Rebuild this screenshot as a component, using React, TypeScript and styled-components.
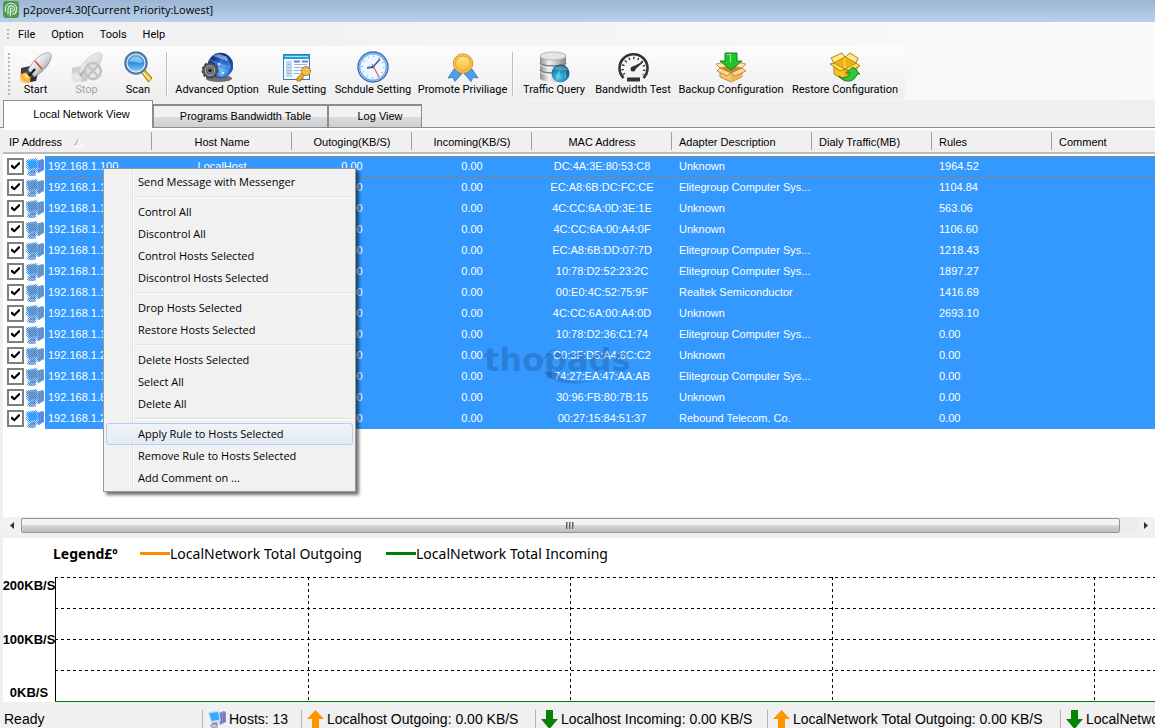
import React from 'react';
import styled, { createGlobalStyle, css } from 'styled-components';

const GlobalStyle = createGlobalStyle`
  *, *::before, *::after { box-sizing: border-box; }
  body {
    margin: 0;
    background: #f0f0f0;
    color: #000;
    font-family: "Liberation Sans", Arial, sans-serif;
    font-size: 11px;
  }
  button { font: inherit; color: inherit; border: 0; background: none; padding: 0; margin: 0; }
`;

const humanist = '"Open Sans", "Noto Sans", sans-serif';
const compact = 'Roboto, "Open Sans", sans-serif';

const Window = styled.div`
  position: relative;
  display: flex;
  flex-direction: column;
  min-height: 100vh;
  overflow: hidden;
`;

/* ---------- title, menu bar ---------- */

const TitleBar = styled.header`
  display: flex;
  align-items: center;
  gap: 4px;
  height: 22px;
  padding: 0 3px 4px;
  background: linear-gradient(#9cb6d3, #b8d2ec);
  font-family: ${humanist};
`;

const Title = styled.h1`
  margin: 0;
  font-size: 11px;
  font-weight: 400;
`;

const MenuBar = styled.nav`
  display: flex;
  align-items: center;
  height: 24px;
  padding-left: 7px;
  background: linear-gradient(90deg, #f0f0f0, #fafafa);
  font-family: ${compact};
`;

const Grip = styled.span<{ $height: number }>`
  width: 2px;
  height: ${p => p.$height}px;
  background: repeating-linear-gradient(#b8b8b8 0 2px, transparent 2px 4px);
`;

const MenuButton = styled.button`
  margin-left: 9px;
  padding-right: 7px;
`;

/* ---------- tool bar ---------- */

const Rebar = styled.div`
  display: flex;
  height: 54px;
  padding-left: 4px;
  background: linear-gradient(90deg, #f0f0f0, #fafafa);
`;

const ToolBar = styled.div`
  display: flex;
  align-items: center;
  height: 53px;
  padding: 2px 2px 0 4px;
  border-radius: 3px;
  background: linear-gradient(#fcfcfc, #eeeeee);
  font-family: ${compact};
`;

const ToolButton = styled.button<{ $width: number }>`
  display: flex;
  flex-direction: column;
  align-items: center;
  flex: none;
  width: ${p => p.$width}px;
  white-space: nowrap;
  line-height: 14px;
  &:disabled { color: #a5a5a5; }
  svg { display: block; }
`;

const ToolSeparator = styled.span`
  width: 2px;
  height: 44px;
  margin: 0 3px 0 2px;
  border-left: 1px solid #bdbdbd;
  border-right: 1px solid #fff;
`;

/* ---------- tabs ---------- */

const TabStrip = styled.div`
  display: flex;
  align-items: flex-end;
  height: 28px;
  padding-left: 3px;
  border-bottom: 1px solid #898c95;
`;

const Tab = styled.button<{ $width: number }>`
  width: ${p => p.$width}px;
  height: 23px;
  padding: 0 0 1px 10px;
  border: 1px solid #898c95;
  border-top-width: 2px;
  border-bottom: 0;
  background: linear-gradient(#f2f2f2 0 50%, #dddddd 50%, #cfcfcf);
  &[aria-selected="true"] {
    position: relative;
    height: 28px;
    margin-bottom: -1px;
    padding: 0 0 2px 7px;
    border-top-width: 1px;
    background: #fff;
  }
`;

/* ---------- host list ---------- */

const ListPane = styled.main`
  flex: 1;
  display: flex;
  flex-direction: column;
  margin-left: 3px;
  padding-top: 2px;
  background: #fff;
`;

const HostTable = styled.table`
  width: 100%;
  table-layout: fixed;
  border-collapse: separate;
  border-spacing: 0;
`;

type Align = 'left' | 'center';

const HeadCell = styled.th<{ $align: Align }>`
  height: 26px;
  padding: 0 7px;
  border-bottom: 2px solid #fff;
  background:
    linear-gradient(#a0a0a0, #a0a0a0) right 2px / 1px 18px no-repeat,
    linear-gradient(#f0f0f0 0 22px, #bcbcbc 22px);
  font-weight: 400;
  text-align: ${p => p.$align};
  white-space: nowrap;
  &:first-child { padding-left: 6px; }
  &:last-child { background: linear-gradient(#f0f0f0 0 22px, #bcbcbc 22px); }
`;

const SortMark = styled.svg`
  margin-left: 12px;
  vertical-align: -1px;
`;

const dots = 'repeating-linear-gradient(90deg, #d07010 0 1px, #3399ff 1px 2px)';

const focusLine = css`
  background: ${dots} left top / 100% 1px no-repeat, ${dots} left bottom / 100% 1px no-repeat, #3399ff;
`;

const Cell = styled.td<{ $align: Align; $focused: boolean }>`
  height: 21px;
  padding: 0 7px 1px;
  background: #3399ff;
  color: #fff;
  text-align: ${p => p.$align};
  white-space: nowrap;
  ${p => p.$focused && focusLine}
`;

const HostCell = styled.td`
  height: 21px;
  padding: 0 0 0 4px;
`;

const HostLine = styled.div`
  display: flex;
  align-items: center;
  gap: 2px;
`;

const HostAddress = styled.label<{ $focused: boolean }>`
  display: flex;
  align-items: center;
  flex: 1;
  height: 21px;
  padding: 0 0 1px 3px;
  background: #3399ff;
  color: #fff;
  ${p => p.$focused && focusLine}
`;

const HostIconSlot = styled.span`
  display: block;
  width: 17px;
  height: 18px;
  svg { display: block; }
`;

const HostCheck = styled.input`
  appearance: none;
  flex: none;
  width: 17px;
  height: 17px;
  margin: 0;
  border: 2px solid #7f7f7f;
  background: #fff;
  &:checked::before {
    content: "";
    display: block;
    width: 9px;
    height: 8px;
    margin: 2px;
    background: #000;
    clip-path: polygon(0 40%, 12% 32%, 36% 60%, 88% 0, 100% 6%, 100% 24%, 38% 94%, 0 62%);
  }
`;

const ScrollBar = styled.div`
  display: flex;
  height: 17px;
  margin-top: auto;
  background: #ececec;
`;

const ScrollArrow = styled.button`
  display: flex;
  align-items: center;
  justify-content: center;
  flex: none;
  width: 18px;
  background: #f1f1f1;
`;

const ScrollThumb = styled.div`
  display: flex;
  align-items: center;
  justify-content: center;
  flex: 1;
  height: 15px;
  margin: 1px 17px 0 0;
  border: 1px solid #979797;
  border-radius: 2px;
  background: linear-gradient(#f3f3f3 0 45%, #d6d6d8 50%, #bcbdc0);
`;

const ThumbGrip = styled.span`
  width: 9px;
  height: 7px;
  background: repeating-linear-gradient(90deg, #606060 0 1px, #a8a8a8 1px 2px, transparent 2px 3px);
`;

/* ---------- traffic chart ---------- */

const ChartPane = styled.section`
  margin: 4px 0 0 3px;
  background: #fff;
`;

const Legend = styled.div`
  display: flex;
  align-items: center;
  height: 38px;
  padding: 0 0 8px 50px;
  font-family: "Noto Sans", "Open Sans", sans-serif;
  font-size: 14px;
  white-space: nowrap;
`;

const LegendTitle = styled.strong`
  width: 87px;
`;

const LegendItem = styled.span<{ $color: string }>`
  display: flex;
  align-items: center;
  width: 246px;
  &::before {
    content: "";
    width: 30px;
    height: 3px;
    background: ${p => p.$color};
  }
`;

const ChartBody = styled.div`
  display: flex;
  height: 126px;
`;

const Scale = styled.div`
  display: flex;
  flex-direction: column;
  justify-content: space-between;
  align-items: center;
  flex: none;
  width: 52px;
  padding: 2px 0 1px;
  font-size: 13px;
  font-weight: 700;
  line-height: 16px;
`;

const Plot = styled.svg`
  flex: 1;
  min-width: 0;
  height: 126px;
  display: block;
`;

/* ---------- status bar ---------- */

const StatusBar = styled.footer`
  display: flex;
  height: 26px;
  overflow: hidden;
  font-size: 14px;
`;

const StatusPane = styled.div<{ $width: number }>`
  display: flex;
  align-items: center;
  flex: none;
  gap: 3px;
  width: ${p => p.$width}px;
  height: 34px;
  padding-left: 6px;
  white-space: nowrap;
  background: linear-gradient(#b4b4b4, #b4b4b4) 0 8px / 1px 18px no-repeat;
  &:first-child { background: none; padding-left: 4px; }
  svg { flex: none; }
`;

/* ---------- context menu and watermark ---------- */

const ContextMenu = styled.div`
  position: absolute;
  left: 103px;
  top: 168px;
  width: 253px;
  padding: 2px;
  border: 1px solid #979797;
  background: linear-gradient(90deg, transparent 28px, #e0e0e0 28px 29px, #fff 29px 30px, transparent 30px) #f1f1f1;
  box-shadow: 3px 3px 3px rgba(0, 0, 0, 0.55);
  font-family: ${humanist};
`;

const MenuItem = styled.button<{ $active: boolean }>`
  display: block;
  width: 100%;
  height: 22px;
  padding-left: 31px;
  border: 1px solid transparent;
  border-radius: 3px;
  text-align: left;
  font-size: 11px;
  line-height: 20px;
  ${p => p.$active && css`
    border-color: #aecff7;
    background: linear-gradient(rgba(240, 244, 250, 0.8), rgba(222, 232, 246, 0.8));
  `}
`;

const MenuRule = styled.hr`
  height: 2px;
  margin: 3px 0 3px 28px;
  border: 0;
  border-top: 1px solid #e0e0e0;
  border-bottom: 1px solid #fff;
`;

const Watermark = styled.div`
  position: absolute;
  left: 484px;
  top: 344px;
  color: rgba(30, 70, 130, 0.32);
  font: 700 32px/32px "DejaVu Sans", sans-serif;
  pointer-events: none;
  svg { position: absolute; left: 52px; top: 0; }
`;

/* ---------- drawings ---------- */

const Rocket = ({ muted = false }: { muted?: boolean }) => {
  const id = muted ? 'rk-m' : 'rk';
  return (
    <svg width="32" height="32" viewBox="0 0 32 32" opacity={muted ? 0.75 : 1}>
      <defs>
        <linearGradient id={id} x1="0" y1="0" x2="1" y2="1">
          <stop offset="0.2" stopColor={muted ? '#ececec' : '#ffffff'} />
          <stop offset="0.55" stopColor={muted ? '#d6d6d6' : '#d4d6da'} />
          <stop offset="0.9" stopColor={muted ? '#b0b0b0' : '#6c6f76'} />
        </linearGradient>
        <radialGradient id={id + 'f'}>
          <stop offset="0" stopColor={muted ? '#eee' : '#fff27a'} />
          <stop offset="0.5" stopColor={muted ? '#ddd' : '#ffab2c'} />
          <stop offset="1" stopColor={muted ? '#ddd' : '#ff8a10'} stopOpacity="0" />
        </radialGradient>
      </defs>
      <circle cx="7" cy="25" r="9" fill={`url(#${id}f)`} />
      <path d="M10 15 1 17v6l6-2z" fill={muted ? '#c4c4c4' : '#3d4048'} />
      <path d="M18 22l-2 8-6 1 1-7z" fill={muted ? '#bdbdbd' : '#2c2e34'} />
      <path d="M8 20c3-8 10-16 18-18 4-1 6 1 5 5-2 7-8 14-17 19z" fill={`url(#${id})`} stroke={muted ? '#bbb' : '#85888e'} strokeWidth=".7" />
      <path d="M8 19l6 6-3 2-5-5z" fill={muted ? '#c2c2c2' : '#4a4d55'} />
      <path d="M15 10l7 8" stroke={muted ? '#c8c8c8' : '#e8432e'} strokeWidth="1.600" />
      <path d="M15 18l-6 7" stroke={muted ? '#999' : '#1c1d20'} strokeWidth="2.200" />
      {muted && (
        <g fill="none" stroke="#b2b2b2" strokeWidth="2.400">
          <circle cx="22" cy="20" r="8" fill="#d8d8d8" fillOpacity=".55" />
          <path d="M17 15l10 10M27 15 17 25" />
        </g>
      )}
    </svg>
  );
};

const Magnifier = () => (
  <svg width="32" height="32" viewBox="0 0 32 32">
    <defs>
      <linearGradient id="lens" x1="0" y1="0" x2="0" y2="1">
        <stop offset="0" stopColor="#7cc4f2" />
        <stop offset=".5" stopColor="#2c8ddd" />
        <stop offset="1" stopColor="#9bdcfa" />
      </linearGradient>
    </defs>
    <path d="M19 21l3-3 8 9-3.500 4z" fill="#e8b923" stroke="#9a7412" strokeWidth="1" />
    <path d="M21 21l7 8" stroke="#fff0a0" strokeWidth="1.500" />
    <circle cx="14" cy="12" r="10.500" fill="url(#lens)" stroke="#55759a" strokeWidth="2.500" />
    <circle cx="14" cy="12" r="9" fill="none" stroke="#e4eef8" strokeWidth="1.200" />
    <path d="M7 11c1-6 12-7 14 0-4 3-9-2-14 0z" fill="#fff" opacity=".35" />
  </svg>
);

const GlobeGear = () => (
  <svg width="32" height="32" viewBox="0 0 32 32">
    <defs>
      <radialGradient id="gl" cx=".55" cy=".7" r=".7">
        <stop offset="0" stopColor="#6fc3ff" />
        <stop offset=".5" stopColor="#2467cf" />
        <stop offset="1" stopColor="#0b2170" />
      </radialGradient>
    </defs>
    <ellipse cx="18" cy="27.500" rx="13" ry="3.500" fill="#444" opacity=".75" />
    <circle cx="19.500" cy="14.500" r="12.500" fill="url(#gl)" stroke="#173a88" strokeWidth=".6" />
    <path d="M9 9l9 4 7-8M18 13l11 3-8 9-9-5zM18 13l3 12M29 16l-4-11" fill="none" stroke="#a9dcff" strokeWidth=".5" opacity=".8" />
    <path d="M12 5c5-4 13-1 15 4-4-1-7 0-9-2-2-1-4-1-6-2z" fill="#fff" opacity=".45" />
    <circle cx="18" cy="13" r="1" fill="#fff" /><circle cx="25" cy="9" r=".8" fill="#fff" /><circle cx="22" cy="22" r="1" fill="#fff" />
    <circle cx="9" cy="19.500" r="7.400" fill="#4a4d51" stroke="#3a3d41" strokeWidth="2" strokeDasharray="2.800 1.300" />
    <circle cx="9" cy="19.500" r="7" fill="#54575b" />
    <circle cx="9" cy="19.500" r="4.600" fill="none" stroke="#a8abae" strokeWidth="1.200" />
    <circle cx="9" cy="19.500" r="2.400" fill="#222" stroke="#909396" />
  </svg>
);

const RuleSheet = () => (
  <svg width="32" height="32" viewBox="0 0 32 32">
    <rect x="2.500" y="3.500" width="26" height="25" fill="#f4faff" stroke="#2d83b8" />
    <rect x="3" y="4" width="25" height="4" fill="#2a9fd8" />
    <rect x="4" y="5" width="23" height="1" fill="#a6e0f8" />
    <rect x="5" y="10" width="6" height="16" fill="#c4d8e8" />
    <path d="M13 10.500h6M21 10.500h6" stroke="#5a8cc8" strokeWidth="2" />
    <path d="M6 13.500h4M13 13.500h13M6 16.500h4M13 16.500h13M6 19.500h4M13 19.500h8M6 22.500h4M13 22.500h6" stroke="#9fb6d6" strokeWidth="1.200" />
    <path d="M23 20l-7 7v3h4v-2h2v-2l3-3z" fill="#f1a52c" stroke="#b06c12" strokeWidth=".8" />
    <circle cx="25" cy="20" r="4.500" fill="#f8bd48" stroke="#b5721a" strokeWidth=".9" />
    <circle cx="26" cy="18.500" r="1.400" fill="#fff" stroke="#a86a14" strokeWidth=".6" />
  </svg>
);

const Clock = () => (
  <svg width="34" height="32" viewBox="0 0 34 32">
    <circle cx="17" cy="16" r="15" fill="#edf6ff" stroke="#3b68a8" strokeWidth="1.400" />
    <circle cx="17" cy="16" r="13.400" fill="none" stroke="#72b3f0" strokeWidth="1.800" />
    <circle cx="17" cy="16" r="10.800" fill="none" stroke="#7b93b0" strokeWidth="1.600" strokeDasharray=".8 4.850" />
    <path d="M17 16l7-8" stroke="#3c55b0" strokeWidth="1.500" />
    <path d="M17 16l-6 .8" stroke="#3c55b0" strokeWidth="1.800" />
    <path d="M16 13l7 13" stroke="#f0603c" strokeWidth="1.200" />
    <circle cx="17" cy="16" r="1.300" fill="#4055a0" />
  </svg>
);

const Rosette = () => (
  <svg width="32" height="32" viewBox="0 0 32 32">
    <defs>
      <linearGradient id="md" x1="0" y1="0" x2="0" y2="1">
        <stop offset="0" stopColor="#ffe680" /><stop offset="1" stopColor="#f8bb38" />
      </linearGradient>
    </defs>
    <path d="M7 18 1 27l5-.500 2 4 7-8zM25 18l6 9-5-.500-2 4-7-8z" fill="#4b9fe6" stroke="#2b6fb4" strokeWidth=".7" />
    <circle cx="16" cy="12.500" r="9.600" fill="#f5b63a" stroke="#c98518" strokeWidth="1" />
    <circle cx="16" cy="12.500" r="8.800" fill="none" stroke="#f9cf6a" strokeWidth="1" />
    <circle cx="16" cy="12.500" r="7.400" fill="url(#md)" stroke="#e09a20" strokeWidth=".8" />
  </svg>
);

const Database = () => (
  <svg width="32" height="32" viewBox="0 0 32 32">
    <defs>
      <linearGradient id="db"><stop offset="0" stopColor="#8b8e92" /><stop offset=".35" stopColor="#f4f4f4" /><stop offset="1" stopColor="#84878b" /></linearGradient>
      <radialGradient id="sp" cx=".4" cy=".7" r=".7"><stop offset="0" stopColor="#57d0ea" /><stop offset=".6" stopColor="#1583b2" /><stop offset="1" stopColor="#0a4a72" /></radialGradient>
    </defs>
    <path d="M2 5v22c0 5 26 5 26 0V5z" fill="url(#db)" />
    <path d="M2 12c1 4 25 4 26 0M2 19c1 4 25 4 26 0" fill="none" stroke="#7e8286" strokeWidth="1.400" />
    <path d="M2 13.500c1 4 25 4 26 0M2 20.500c1 4 25 4 26 0" fill="none" stroke="#fff" strokeWidth=".8" />
    <ellipse cx="15" cy="5" rx="13" ry="4" fill="#e4e5e6" stroke="#a6a8aa" strokeWidth=".8" />
    <circle cx="22.500" cy="22.500" r="9" fill="url(#sp)" />
    <path d="M15 19c2-5 12-6 15 0-4 2-10-2-15 0zM19 30c-1-5 1-10 4-12M27 29c2-4 1-8-1-11" fill="#fff" opacity=".28" />
  </svg>
);

const Gauge = () => (
  <svg width="34" height="32" viewBox="0 0 34 32">
    <path d="M7.500 27a14 14 0 1 1 20 0" fill="none" stroke="#303236" strokeWidth="2.600" />
    <path d="M8.300 23.500a10.800 10.800 0 1 1 18.400 0" fill="none" stroke="#303236" strokeWidth="2.600" strokeDasharray="1.300 3.200" />
    <path d="M16 16.500 27 11l-9 8z" fill="#303236" stroke="#303236" strokeWidth="1" />
    <circle cx="17" cy="18" r="2.500" fill="#303236" />
    <rect x="11" y="26.500" width="13" height="4" fill="#303236" />
  </svg>
);

const BackupBox = () => (
  <svg width="32" height="32" viewBox="0 0 32 32">
    <path d="M5 17l11 5 11-5v9l-11 5-11-5z" fill="#f9c766" stroke="#a97c34" strokeWidth=".8" />
    <path d="M16 22v9l11-5v-9z" fill="#f0b450" />
    <path d="M5 17 1 13l9-2 6 5zM27 17l4-4-9-2-6 5z" fill="#ffe3a4" stroke="#a97c34" strokeWidth=".8" />
    <path d="M5 17l11-3 11 3-11 5z" fill="#c8862a" />
    <path d="M5 17l-3 3 10 5 4-3zM27 17l4 3-11 5-4-3z" fill="#fddb92" stroke="#a97c34" strokeWidth=".8" />
    <path d="M10 2h12v8h5L16 19 5 10h5z" fill="#1fc228" stroke="#0b7c14" strokeWidth=".9" />
    <path d="M11.500 3.500h4v8" stroke="#8cf48c" strokeWidth="1.200" fill="none" />
  </svg>
);

const RestoreBox = () => (
  <svg width="34" height="32" viewBox="0 0 34 32">
    <path d="M6 13l10 6 13-5v10l-12 6-11-7z" fill="#f8c420" stroke="#a8741a" strokeWidth=".9" />
    <path d="M16 19l12-5v10l-12 6z" fill="#f2a912" />
    <path d="M6 12 16 6l12 6-11 7z" fill="#f6b014" />
    <path d="M16 6l1 12M6 12l11 6 11-6" stroke="#ffe04a" strokeWidth="1.200" fill="none" />
    <path d="M6 12 3 7l11-5 3 4zM28 12l2-5-8-5-5 4z" fill="#ffec7c" stroke="#a8741a" strokeWidth=".9" />
    <path d="M6 12l-4 1 10 7 5-2zM28 12l4 3-10 5-5-2z" fill="#ffdc48" stroke="#a8741a" strokeWidth=".9" />
    <path d="M11 25c4 3 9 2 11-3h-4l7-6 7 7h-3c-2 8-12 10-18 2z" fill="#2ec63a" stroke="#0e7f1c" strokeWidth=".9" />
  </svg>
);

const AppMark = () => (
  <svg width="16" height="17" viewBox="0 0 16 17">
    <rect width="16" height="17" rx="3" fill="#4e9a50" />
    <g fill="none" stroke="#e4f5df" strokeWidth="1.100" strokeLinecap="round">
      <path d="M2.500 10.500C1 6 4 2.300 8 2.300s7 4 5 8" />
      <path d="M5 13V8.500c0-5 6.500-4.500 6.500-.8 0 3-3.500 3.300-4 2.300" />
      <path d="M7.300 15V8.300c0-2 2-1.500 2-.3" />
      <path d="M9.500 13c2 0 3.500-1.500 4-3" />
    </g>
  </svg>
);

const HostIcon = ({ local, dithered = true }: { local: boolean; dithered?: boolean }) => (
  <svg width="18" height="18" viewBox="0 0 18 18">
    <defs>
      <pattern id="dither" width="2" height="2" patternUnits="userSpaceOnUse">
        <path d="M1 0h1v1H1zM0 1h1v1H0z" fill="#3399ff" shapeRendering="crispEdges" />
      </pattern>
      <clipPath id="host-shape">
        <path d="M0 2 3 1l8-1 1 3 5-2 1 1v10l-5 3-3-1v2l-4 2-5-1 1-4-2-3z" />
      </clipPath>
    </defs>
    <path d="M10 3l6-2 2 1v10l-6 3z" fill={local ? '#8c8ed6' : '#9a9ca4'} />
    <path d="M13 4v9M16 3v9" stroke={local ? '#5b5cad' : '#70747c'} />
    <path d="M0 2 11 .500 13 11l-10 2z" fill={local ? '#c4daf4' : '#b9bbc0'} />
    <path d="M1.500 3.300 10 2l1.500 7.500-8 1.500z" fill={local ? '#33aaff' : '#8c9096'} />
    <path d="M4 13l5-1 1 3-6 1z" fill="#8b8da0" />
    <path d="M2 15l6-1 2 3-6 1z" fill="#c5c8d4" stroke="#8084a0" strokeWidth=".6" />
    {dithered && <rect width="18" height="18" fill="url(#dither)" clipPath="url(#host-shape)" />}
  </svg>
);

const Arrow = ({ up }: { up: boolean }) => (
  <svg width="17" height="19" viewBox="0 0 17 19">
    {up
      ? <path d="M8.500 0 17 9h-5v10H5V9H0z" fill="#ff9500" />
      : <path d="M5 0h7v9h5l-8.500 10L0 9h5z" fill="#078207" />}
  </svg>
);

/* ---------- data ---------- */

interface Tool { label: string; width: number; icon: React.ReactNode; disabled?: boolean }

const toolGroups: Tool[][] = [
  [
    { label: 'Start', width: 51, icon: <Rocket /> },
    { label: 'Stop', width: 51, icon: <Rocket muted />, disabled: true },
    { label: 'Scan', width: 52, icon: <Magnifier /> },
  ],
  [
    { label: 'Advanced Option', width: 92, icon: <GlobeGear /> },
    { label: 'Rule Setting', width: 68, icon: <RuleSheet /> },
    { label: 'Schdule Setting', width: 84, icon: <Clock /> },
    { label: 'Promote Priviliage', width: 95, icon: <Rosette /> },
  ],
  [
    { label: 'Traffic Query', width: 74, icon: <Database /> },
    { label: 'Bandwidth Test', width: 84, icon: <Gauge /> },
    { label: 'Backup Configuration', width: 112, icon: <BackupBox /> },
    { label: 'Restore Configuration', width: 116, icon: <RestoreBox /> },
  ],
];

const columns: { title: string; width?: number; align: Align }[] = [
  { title: 'IP Address', width: 149, align: 'left' },
  { title: 'Host Name', width: 140, align: 'center' },
  { title: 'Outoging(KB/S)', width: 120, align: 'center' },
  { title: 'Incoming(KB/S)', width: 120, align: 'center' },
  { title: 'MAC Address', width: 140, align: 'center' },
  { title: 'Adapter Description', width: 140, align: 'left' },
  { title: 'Dialy Traffic(MB)', width: 120, align: 'left' },
  { title: 'Rules', width: 120, align: 'left' },
  { title: 'Comment', align: 'left' },
];

const ELITE = 'Elitegroup Computer Sys...';

const hosts: [string, string, string, string, string][] = [
  ['192.168.1.100', 'LocalHost', 'DC:4A:3E:80:53:C8', 'Unknown', '1964.52'],
  ['192.168.1.1', '', 'EC:A8:6B:DC:FC:CE', ELITE, '1104.84'],
  ['192.168.1.1', '', '4C:CC:6A:0D:3E:1E', 'Unknown', '563.06'],
  ['192.168.1.1', '', '4C:CC:6A:00:A4:0F', 'Unknown', '1106.60'],
  ['192.168.1.1', '', 'EC:A8:6B:DD:07:7D', ELITE, '1218.43'],
  ['192.168.1.1', '', '10:78:D2:52:23:2C', ELITE, '1897.27'],
  ['192.168.1.1', '', '00:E0:4C:52:75:9F', 'Realtek Semiconductor', '1416.69'],
  ['192.168.1.1', '', '4C:CC:6A:00:A4:0D', 'Unknown', '2693.10'],
  ['192.168.1.1', '', '10:78:D2:36:C1:74', ELITE, '0.00'],
  ['192.168.1.2', '', 'C0:3F:D5:A4:6C:C2', 'Unknown', '0.00'],
  ['192.168.1.1', '', '74:27:EA:47:AA:AB', ELITE, '0.00'],
  ['192.168.1.8', '', '30:96:FB:80:7B:15', 'Unknown', '0.00'],
  ['192.168.1.2', '', '00:27:15:84:51:37', 'Rebound Telecom. Co.', '0.00'],
];

const menuGroups = [
  ['Send Message with Messenger'],
  ['Control All', 'Discontrol All', 'Control Hosts Selected', 'Discontrol Hosts Selected'],
  ['Drop Hosts Selected', 'Restore Hosts Selected'],
  ['Delete Hosts Selected', 'Select All', 'Delete All'],
  ['Apply Rule to Hosts Selected', 'Remove Rule to Hosts Selected', 'Add Comment on ...'],
];

export default function App() {
  return (
    <Window>
      <GlobalStyle />
      <TitleBar>
        <AppMark />
        <Title>p2pover4.30[Current Priority:Lowest]</Title>
      </TitleBar>
      <MenuBar>
        <Grip $height={10} />
        {['File', 'Option', 'Tools', 'Help'].map(name => <MenuButton key={name}>{name}</MenuButton>)}
      </MenuBar>
      <Rebar>
        <ToolBar>
          <Grip $height={42} />
          {toolGroups.map((group, i) => (
            <React.Fragment key={i}>
              {i > 0 && <ToolSeparator />}
              {group.map(tool => (
                <ToolButton key={tool.label} $width={tool.width} disabled={tool.disabled}>
                  {tool.icon}
                  {tool.label}
                </ToolButton>
              ))}
            </React.Fragment>
          ))}
        </ToolBar>
      </Rebar>
      <TabStrip role="tablist">
        <Tab role="tab" aria-selected="true" $width={150}>Local Network View</Tab>
        <Tab role="tab" aria-selected="false" $width={175}>Programs Bandwidth Table</Tab>
        <Tab role="tab" aria-selected="false" $width={94}>Log View</Tab>
      </TabStrip>

      <ListPane>
        <HostTable>
          <colgroup>
            {columns.map(c => <col key={c.title} width={c.width} />)}
          </colgroup>
          <thead>
            <tr>
              {columns.map((c, i) => (
                <HeadCell key={c.title} $align={c.align} scope="col">
                  {c.title}
                  {i === 0 && (
                    <SortMark width="9" height="8" viewBox="0 0 9 8">
                      <path d="M0 7.500 4.500 0" stroke="#a0a0a0" />
                      <path d="M4.500 0 8.500 7.500H0" stroke="#fff" fill="none" />
                    </SortMark>
                  )}
                </HeadCell>
              ))}
            </tr>
          </thead>
          <tbody>
            {hosts.map(([ip, name, mac, adapter, rules], i) => {
              const focused = i === 0;
              const values = [name, '0.00', '0.00', mac, adapter, '', rules, ''];
              return (
                <tr key={mac}>
                  <HostCell>
                    <HostLine>
                      <HostCheck type="checkbox" id={`host-${i}`} defaultChecked />
                      <HostIconSlot><HostIcon local={i === 0 || i === hosts.length - 1} /></HostIconSlot>
                      <HostAddress htmlFor={`host-${i}`} $focused={focused}>{ip}</HostAddress>
                    </HostLine>
                  </HostCell>
                  {values.map((v, c) => (
                    <Cell key={c} $align={columns[c + 1].align} $focused={focused}>{v}</Cell>
                  ))}
                </tr>
              );
            })}
          </tbody>
        </HostTable>
        <ScrollBar>
          <ScrollArrow aria-label="Scroll left">
            <svg width="4" height="7"><path d="M4 0v7L0 3.500z" fill="#333" /></svg>
          </ScrollArrow>
          <ScrollThumb><ThumbGrip /></ScrollThumb>
          <ScrollArrow aria-label="Scroll right">
            <svg width="4" height="7"><path d="M0 0v7l4-3.500z" fill="#333" /></svg>
          </ScrollArrow>
        </ScrollBar>
      </ListPane>

      <ChartPane>
        <Legend>
          <LegendTitle>Legend£º</LegendTitle>
          <LegendItem $color="#ff8c00">LocalNetwork Total Outgoing</LegendItem>
          <LegendItem $color="#008000">LocalNetwork Total Incoming</LegendItem>
        </Legend>
        <ChartBody>
          <Scale>
            <span>200KB/S</span>
            <span>100KB/S</span>
            <span>0KB/S</span>
          </Scale>
          <Plot shapeRendering="crispEdges">
            <g stroke="#000" strokeDasharray="3 3">
              {[1, 32, 63, 94].map(y => <line key={y} x1="0" x2="100%" y1={y + 0.5} y2={y + 0.5} />)}
              {[253, 515, 777, 1039].map(x => <line key={x} x1={x + 0.5} x2={x + 0.5} y1="1" y2="125" />)}
            </g>
            <line x1="0.5" x2="0.5" y1="1" y2="126" stroke="#000" />
            <line x1="0" x2="100%" y1="125.5" y2="125.5" stroke="#008000" />
          </Plot>
        </ChartBody>
      </ChartPane>

      <StatusBar>
        <StatusPane $width={202}>Ready</StatusPane>
        <StatusPane $width={99}><HostIcon local dithered={false} />Hosts: 13</StatusPane>
        <StatusPane $width={234}><Arrow up />Localhost Outgoing: 0.00 KB/S</StatusPane>
        <StatusPane $width={232}><Arrow up={false} />Localhost Incoming: 0.00 KB/S</StatusPane>
        <StatusPane $width={293}><Arrow up />LocalNetwork Total Outgoing: 0.00 KB/S</StatusPane>
        <StatusPane $width={293}><Arrow up={false} />LocalNetwork Total Incoming: 0.00 KB/S</StatusPane>
      </StatusBar>

      <Watermark>
        thopads
        <svg width="76" height="42" viewBox="0 0 76 42" fill="currentColor">
          <path d="M24 2C12 6 6 14 5 22c2-7 8-14 19-20z" />
          <path d="M8 28c8 12 32 15 54 7-18 5-36 3-42-7z" />
        </svg>
      </Watermark>

      <ContextMenu role="menu">
        {menuGroups.map((group, i) => (
          <React.Fragment key={i}>
            {i > 0 && <MenuRule />}
            {group.map(item => (
              <MenuItem key={item} role="menuitem" $active={item.startsWith('Apply')}>{item}</MenuItem>
            ))}
          </React.Fragment>
        ))}
      </ContextMenu>
    </Window>
  );
}
